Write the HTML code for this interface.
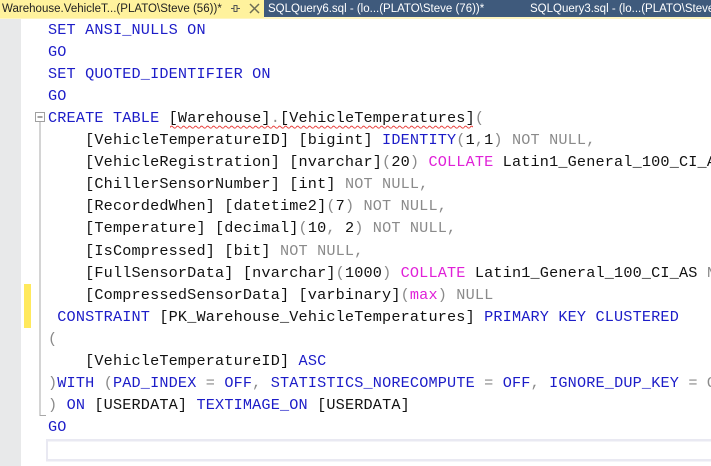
<!DOCTYPE html>
<html><head><meta charset="utf-8">
<style>
html,body{margin:0;padding:0;width:711px;height:466px;overflow:hidden;background:#fff}
#r{position:absolute;left:0;top:0;width:711px;height:466px;overflow:hidden}
#gut{position:absolute;left:0;top:18px;width:21px;height:448px;background:#e8e9ea}
#bar{position:absolute;left:0;top:0;width:711px;height:17px;background:#3f5a7c}
#line{position:absolute;left:0;top:17px;width:711px;height:2px;background:#fff5c0}
#tab{position:absolute;left:0;top:0;width:264px;height:18px;background:#fff29d}
.t{position:absolute;top:1px;font:11.5px/17px "Liberation Sans",sans-serif;white-space:pre;color:#fff}
.c{position:absolute;left:48px;width:663px;overflow:hidden;font:15.2px/22px "Liberation Mono",monospace;letter-spacing:.165px;white-space:pre;color:#111}
.k{color:#1c1cc8}.g{color:#8a8a8a}.p{color:#e020d8}
</style></head><body><div id="r">
<div id="gut"></div>
<div id="bar"></div><div id="line"></div><div id="tab"></div>
<div class="t" style="left:2px;color:#222;letter-spacing:.02px">Warehouse.VehicleT...(PLATO\Steve (56))*</div>
<svg style="position:absolute;left:0;top:0" width="711" height="466">
<defs><pattern id="w" x="170" y="125" width="6" height="4" patternUnits="userSpaceOnUse"><path d="M0 2.500Q1.500 0 3 2 4.500 4 6 2.500" stroke="#e8403c" fill="none"/></pattern></defs>
<path d="M231 8.5h3M234 5.500h3v6h-3zM237 8.500h3M237 5v7" stroke="#555" fill="none"/>
<path d="M250 4l9 9M259 4l-9 9" stroke="#6d6d55" stroke-width="1.500" fill="none"/>
<rect x="24" y="284" width="7" height="44" fill="#ffe95c"/>
<path d="M40 122V415.500H46" stroke="#a8a8a8" fill="none"/>
<rect x="35.500" y="112.500" width="9" height="9" fill="#fff" stroke="#a0a0a0"/>
<path d="M37.500 117h5" stroke="#444"/>
<rect x="46" y="439" width="665" height="2.500" fill="#e9e9f2"/>
<rect x="46" y="459" width="665" height="2.500" fill="#e9e9f2"/>
<rect x="46" y="439" width="2" height="22.500" fill="#e9e9f2"/>
<rect x="170" y="125" width="303" height="4" fill="url(#w)"/>
</svg>
<div class="t" style="left:268px">SQLQuery6.sql - (lo...(PLATO\Steve (76))*</div>
<div class="t" style="left:530px;width:181px;overflow:hidden">SQLQuery3.sql - (lo...(PLATO\Steve (73))</div>
<div class="c" style="top:19px"><span class="k">SET ANSI_NULLS ON</span></div>
<div class="c" style="top:41px"><span class="k">GO</span></div>
<div class="c" style="top:63px"><span class="k">SET QUOTED_IDENTIFIER ON</span></div>
<div class="c" style="top:85px"><span class="k">GO</span></div>
<div class="c" style="top:107px"><span class="k">CREATE TABLE</span> [Warehouse]<span class="g">.</span>[VehicleTemperatures]<span class="g">(</span></div>
<div class="c" style="top:129px">    [VehicleTemperatureID] [bigint] <span class="k">IDENTITY</span><span class="g">(</span>1<span class="g">,</span>1<span class="g">) NOT NULL,</span></div>
<div class="c" style="top:151px">    [VehicleRegistration] [nvarchar]<span class="g">(</span>20<span class="g">)</span> <span class="p">COLLATE</span> Latin1_General_100_CI_AS</div>
<div class="c" style="top:173px">    [ChillerSensorNumber] [int] <span class="g">NOT NULL,</span></div>
<div class="c" style="top:195px">    [RecordedWhen] [datetime2]<span class="g">(</span>7<span class="g">) NOT NULL,</span></div>
<div class="c" style="top:217px">    [Temperature] [decimal]<span class="g">(</span>10<span class="g">,</span> 2<span class="g">) NOT NULL,</span></div>
<div class="c" style="top:240px">    [IsCompressed] [bit] <span class="g">NOT NULL,</span></div>
<div class="c" style="top:262px">    [FullSensorData] [nvarchar]<span class="g">(</span>1000<span class="g">)</span> <span class="p">COLLATE</span> Latin1_General_100_CI_AS <span class="g">N</span></div>
<div class="c" style="top:284px">    [CompressedSensorData] [varbinary]<span class="g">(</span><span class="p">max</span><span class="g">) NULL</span></div>
<div class="c" style="top:306px"> <span class="k">CONSTRAINT</span> [PK_Warehouse_VehicleTemperatures] <span class="k">PRIMARY KEY CLUSTERED</span></div>
<div class="c" style="top:328px"><span class="g">(</span></div>
<div class="c" style="top:350px">    [VehicleTemperatureID] <span class="k">ASC</span></div>
<div class="c" style="top:372px"><span class="g">)</span><span class="k">WITH</span> <span class="g">(</span><span class="k">PAD_INDEX</span> <span class="g">=</span> <span class="k">OFF</span><span class="g">,</span> <span class="k">STATISTICS_NORECOMPUTE</span> <span class="g">=</span> <span class="k">OFF</span><span class="g">,</span> <span class="k">IGNORE_DUP_KEY</span> <span class="g">= O</span></div>
<div class="c" style="top:394px"><span class="g">)</span> <span class="k">ON</span> [USERDATA] <span class="k">TEXTIMAGE_ON</span> [USERDATA]</div>
<div class="c" style="top:416px"><span class="k">GO</span></div>
</div></body></html>
